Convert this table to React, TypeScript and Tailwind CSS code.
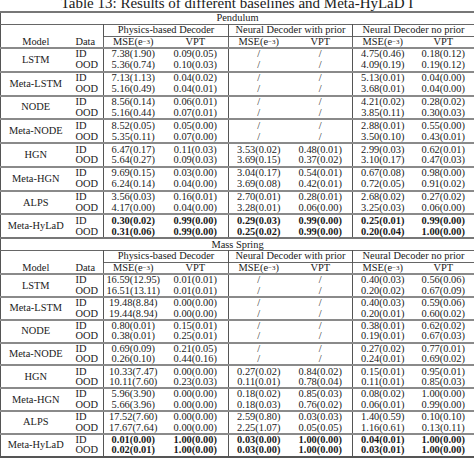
import React from 'react';

type Row = [string, string, string, string, string, string];
interface Block {
  model: string;
  id: Row;
  ood: Row;
  bold?: boolean;
}

const pendulum: Block[] = [
  { model: 'LSTM', id: ['7.38(1.90)', '0.09(0.05)', '/', '/', '4.75(0.46)', '0.18(0.12)'], ood: ['5.36(0.74)', '0.10(0.03)', '/', '/', '4.09(0.19)', '0.19(0.12)'] },
  { model: 'Meta-LSTM', id: ['7.13(1.13)', '0.04(0.02)', '/', '/', '5.13(0.01)', '0.04(0.00)'], ood: ['5.16(0.49)', '0.04(0.01)', '/', '/', '3.68(0.01)', '0.04(0.00)'] },
  { model: 'NODE', id: ['8.56(0.14)', '0.06(0.01)', '/', '/', '4.21(0.02)', '0.28(0.02)'], ood: ['5.16(0.44)', '0.07(0.01)', '/', '/', '3.85(0.11)', '0.30(0.03)'] },
  { model: 'Meta-NODE', id: ['8.52(0.05)', '0.05(0.00)', '/', '/', '2.88(0.01)', '0.55(0.00)'], ood: ['5.35(0.11)', '0.07(0.00)', '/', '/', '3.50(0.10)', '0.43(0.01)'] },
  { model: 'HGN', id: ['6.47(0.17)', '0.11(0.03)', '3.53(0.02)', '0.48(0.01)', '2.99(0.03)', '0.62(0.01)'], ood: ['5.64(0.27)', '0.09(0.03)', '3.69(0.15)', '0.37(0.02)', '3.10(0.17)', '0.47(0.03)'] },
  { model: 'Meta-HGN', id: ['9.69(0.15)', '0.03(0.00)', '3.04(0.17)', '0.54(0.01)', '0.67(0.08)', '0.98(0.00)'], ood: ['6.24(0.14)', '0.04(0.00)', '3.69(0.08)', '0.42(0.01)', '0.72(0.05)', '0.91(0.02)'] },
  { model: 'ALPS', id: ['3.56(0.03)', '0.16(0.01)', '2.70(0.01)', '0.28(0.01)', '2.68(0.02)', '0.27(0.02)'], ood: ['4.17(0.00)', '0.04(0.00)', '3.28(0.01)', '0.06(0.00)', '3.25(0.03)', '0.06(0.00)'] },
  { model: 'Meta-HyLaD', bold: true, id: ['0.30(0.02)', '0.99(0.00)', '0.29(0.03)', '0.99(0.00)', '0.25(0.01)', '0.99(0.00)'], ood: ['0.31(0.06)', '0.99(0.00)', '0.25(0.02)', '0.99(0.00)', '0.20(0.04)', '1.00(0.00)'] },
];

const massSpring: Block[] = [
  { model: 'LSTM', id: ['16.59(12.95)', '0.01(0.01)', '/', '/', '0.40(0.03)', '0.56(0.06)'], ood: ['16.51(13.11)', '0.01(0.01)', '/', '/', '0.20(0.02)', '0.67(0.09)'] },
  { model: 'Meta-LSTM', id: ['19.48(8.84)', '0.00(0.00)', '/', '/', '0.40(0.03)', '0.59(0.06)'], ood: ['19.44(8.94)', '0.00(0.00)', '/', '/', '0.20(0.01)', '0.60(0.02)'] },
  { model: 'NODE', id: ['0.80(0.01)', '0.15(0.01)', '/', '/', '0.38(0.01)', '0.62(0.02)'], ood: ['0.38(0.01)', '0.25(0.01)', '/', '/', '0.19(0.01)', '0.67(0.03)'] },
  { model: 'Meta-NODE', id: ['0.69(0.09)', '0.21(0.05)', '/', '/', '0.27(0.02)', '0.77(0.01)'], ood: ['0.26(0.10)', '0.44(0.16)', '/', '/', '0.24(0.01)', '0.69(0.02)'] },
  { model: 'HGN', id: ['10.33(7.47)', '0.00(0.00)', '0.27(0.02)', '0.84(0.02)', '0.15(0.01)', '0.95(0.01)'], ood: ['10.11(7.60)', '0.23(0.03)', '0.11(0.01)', '0.78(0.04)', '0.11(0.01)', '0.85(0.03)'] },
  { model: 'Meta-HGN', id: ['5.96(3.90)', '0.00(0.00)', '0.18(0.02)', '0.85(0.03)', '0.08(0.02)', '1.00(0.00)'], ood: ['5.66(3.96)', '0.00(0.00)', '0.18(0.03)', '0.76(0.02)', '0.06(0.01)', '0.99(0.00)'] },
  { model: 'ALPS', id: ['17.52(7.60)', '0.00(0.00)', '2.59(0.80)', '0.03(0.03)', '1.40(0.59)', '0.10(0.10)'], ood: ['17.67(7.64)', '0.00(0.00)', '2.25(1.07)', '0.05(0.05)', '1.16(0.61)', '0.13(0.11)'] },
  { model: 'Meta-HyLaD', bold: true, id: ['0.01(0.00)', '1.00(0.00)', '0.03(0.00)', '1.00(0.00)', '0.04(0.01)', '1.00(0.00)'], ood: ['0.02(0.01)', '1.00(0.00)', '0.03(0.00)', '1.00(0.00)', '0.03(0.01)', '1.00(0.00)'] },
];

// vertical rules sit left of value columns 0, 2 and 4
const vline = (i: number) => (i % 2 === 0 ? 'border-l border-[#555]' : '');

const Mse = () => (
  <span>
    MSE(e<sup className="text-[7px] relative -top-[1px]">−3</sup>)
  </span>
);

const Section: React.FC<{ title: string; blocks: Block[]; rowH: string }> = ({ title, blocks, rowH }) => (
  <>
    <tr className="h-[12px] border-t-2 border-[#777]">
      <td colSpan={8} className="text-center">{title}</td>
    </tr>
    <tr className="h-[12px] border-t border-[#666]">
      <td colSpan={2}></td>
      <td colSpan={2} className="text-center border-l border-[#555]">Physics-based Decoder</td>
      <td colSpan={2} className="text-center border-l border-[#555]">Neural Decoder with prior</td>
      <td colSpan={2} className="text-center border-l border-[#555]">Neural Decoder no prior</td>
    </tr>
    <tr className="h-[12px]">
      <td className="text-center">Model</td>
      <td className="text-left pl-[5px]">Data</td>
      {[0, 1, 2, 3, 4, 5].map((i) => (
        <td key={i} className={`text-center border-t border-[#666] ${vline(i)}`}>
          {i % 2 === 0 ? <Mse /> : 'VPT'}
        </td>
      ))}
    </tr>
    {blocks.map((b) => (
      <React.Fragment key={b.model}>
        <tr className={`${rowH} border-t-2 border-[#8a8a8a]`}>
          <td rowSpan={2} className="text-center align-middle">{b.model}</td>
          <td className="text-left pl-[5px]">ID</td>
          {b.id.map((v, i) => (
            <td key={i} className={`text-center ${vline(i)} ${b.bold ? 'font-bold' : ''}`}>{v}</td>
          ))}
        </tr>
        <tr className={rowH}>
          <td className="text-left pl-[5px]">OOD</td>
          {b.ood.map((v, i) => (
            <td key={i} className={`text-center ${vline(i)} ${b.bold ? 'font-bold' : ''}`}>{v}</td>
          ))}
        </tr>
      </React.Fragment>
    ))}
  </>
);

export default function App() {
  return (
    <div className="w-[474px] h-[465px] overflow-hidden bg-white text-[#1a1a1a] font-['Liberation_Serif','Times_New_Roman',serif]">
      <div className="text-center text-[15px] leading-[14px] -mt-[4px] h-[15px] whitespace-nowrap">
        Table 13: Results of different baselines and Meta-HyLaD I
      </div>
      <table className="w-[474px] table-fixed border-collapse border-x border-b-2 border-[#555] text-[10.4px] leading-[10px] whitespace-nowrap font-['Liberation_Serif','Times_New_Roman',serif]">
        <colgroup>
          <col className="w-[70px]" />
          <col className="w-[33px]" />
          <col className="w-[59px]" />
          <col className="w-[66px]" />
          <col className="w-[60px]" />
          <col className="w-[64px]" />
          <col className="w-[60px]" />
          <col className="w-[62px]" />
        </colgroup>
        <tbody>
          <Section title="Pendulum" blocks={pendulum} rowH="h-[11.9px]" />
          <Section title="Mass Spring" blocks={massSpring} rowH="h-[11.4px]" />
        </tbody>
      </table>
    </div>
  );
}
